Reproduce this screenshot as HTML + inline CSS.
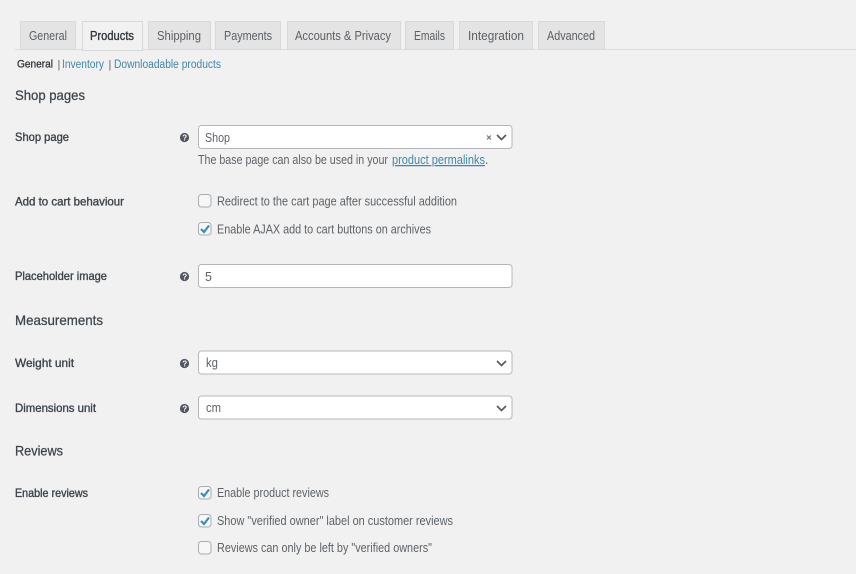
<!DOCTYPE html>
<html><head><meta charset="utf-8"><style>
html,body{margin:0;padding:0;background:#f1f1f1;width:856px;height:574px;overflow:hidden}
svg{display:block;filter:blur(.33px)}
text{font-family:"Liberation Sans",sans-serif;font-size:12.5px;fill:#5d6369}
.tab{fill:#5a6066;font-size:12.5px}
.tabon{fill:#32373c;font-size:12.5px;stroke:#32373c;stroke-width:.35px}
.b{fill:#3c434a;font-size:12px;stroke:#3c434a;stroke-width:.35px}
.sub{fill:#32373c;font-size:11px;stroke:#32373c;stroke-width:.3px}
.h{fill:#3c434a;font-size:14px;stroke:#3c434a;stroke-width:.25px}
.l{fill:#3d87ad;font-size:12px}
.i{fill:#5d6369}
.tb{fill:#e4e4e4;stroke:#d9d9d9}
.f{fill:#fff;stroke:#b4b7ba}
.c{fill:#f7f7f7;stroke:#a9adb1}
.q{fill:#fff;font-size:8px;font-weight:bold}
.chk{fill:none;stroke:#2c8fc4;stroke-width:2.1}
.chev{fill:none;stroke:#50575e;stroke-width:1.6}
</style></head><body>
<svg width="856" height="574" viewBox="0 0 856 574" xmlns="http://www.w3.org/2000/svg">
<rect width="856" height="574" fill="#f1f1f1"/>
<line x1="15" y1="49.5" x2="856" y2="49.5" stroke="#dcdcdc"/>
<rect class="tb" x="20.5" y="21.5" width="55" height="28"/>
<rect x="82.5" y="21.5" width="60" height="29" fill="#f1f1f1" stroke="#d9d9d9"/>
<line x1="83" y1="49.5" x2="142" y2="49.5" stroke="#f1f1f1"/>
<rect class="tb" x="148.5" y="21.5" width="62" height="28"/>
<rect class="tb" x="215.5" y="21.5" width="65" height="28"/>
<rect class="tb" x="287.5" y="21.5" width="113" height="28"/>
<rect class="tb" x="405.5" y="21.5" width="48" height="28"/>
<rect class="tb" x="459.5" y="21.5" width="73" height="28"/>
<rect class="tb" x="538.5" y="21.5" width="66" height="28"/>
<text class="tab" x="29" y="40" textLength="38" lengthAdjust="spacingAndGlyphs">General</text>
<text class="tabon" x="90" y="40" textLength="44" lengthAdjust="spacingAndGlyphs">Products</text>
<text class="tab" x="157" y="40" textLength="44" lengthAdjust="spacingAndGlyphs">Shipping</text>
<text class="tab" x="224" y="40" textLength="48" lengthAdjust="spacingAndGlyphs">Payments</text>
<text class="tab" x="295" y="40" textLength="96" lengthAdjust="spacingAndGlyphs">Accounts &amp; Privacy</text>
<text class="tab" x="414" y="40" textLength="31" lengthAdjust="spacingAndGlyphs">Emails</text>
<text class="tab" x="468" y="40" textLength="56" lengthAdjust="spacingAndGlyphs">Integration</text>
<text class="tab" x="547" y="40" textLength="48" lengthAdjust="spacingAndGlyphs">Advanced</text>

<text class="sub" x="17" y="67.500" textLength="36" lengthAdjust="spacingAndGlyphs">General</text>
<text x="57.5" y="68" style="font-size:11px">|</text>
<text class="l" x="62" y="68" textLength="42" lengthAdjust="spacingAndGlyphs" style="font-size:11.5px">Inventory</text>
<text x="108.5" y="68" style="font-size:11px">|</text>
<text class="l" x="114" y="68" textLength="107" lengthAdjust="spacingAndGlyphs" style="font-size:11.5px">Downloadable products</text>

<text class="h" x="15" y="100" textLength="70" lengthAdjust="spacingAndGlyphs">Shop pages</text>
<text class="b" x="15" y="141" textLength="54" lengthAdjust="spacingAndGlyphs">Shop page</text>
<text class="b" x="15" y="205.500" textLength="109" lengthAdjust="spacingAndGlyphs">Add to cart behaviour</text>
<text class="b" x="15" y="280" textLength="92" lengthAdjust="spacingAndGlyphs">Placeholder image</text>
<text class="h" x="15" y="325" textLength="88" lengthAdjust="spacingAndGlyphs">Measurements</text>
<text class="b" x="15" y="367" textLength="59" lengthAdjust="spacingAndGlyphs">Weight unit</text>
<text class="b" x="15" y="412" textLength="81" lengthAdjust="spacingAndGlyphs">Dimensions unit</text>
<text class="h" x="15" y="455.500" textLength="48" lengthAdjust="spacingAndGlyphs">Reviews</text>
<text class="b" x="15" y="497" textLength="73" lengthAdjust="spacingAndGlyphs">Enable reviews</text>

<g>
<circle cx="184.5" cy="137.5" r="4.6" fill="#50575e"/><text class="q" x="182.3" y="140.5">?</text>
<circle cx="184.5" cy="276.5" r="4.6" fill="#50575e"/><text class="q" x="182.3" y="279.5">?</text>
<circle cx="184.5" cy="363.5" r="4.6" fill="#50575e"/><text class="q" x="182.3" y="366.5">?</text>
<circle cx="184.5" cy="408.5" r="4.6" fill="#50575e"/><text class="q" x="182.3" y="411.5">?</text>
</g>

<rect class="f" x="198.5" y="125.5" width="313.500" height="23" rx="3"/>
<text class="i" x="205" y="142" textLength="25" lengthAdjust="spacingAndGlyphs">Shop</text>
<path d="M487 135.5l4 4m0-4l-4 4" stroke="#6b7177" stroke-width="1.1" fill="none"/>
<path class="chev" d="M497 135l4.500 4.500 4.500-4.500"/>
<text x="198" y="164" textLength="190" lengthAdjust="spacingAndGlyphs">The base page can also be used in your</text>
<text class="l" x="392" y="164" textLength="93" lengthAdjust="spacingAndGlyphs" text-decoration="underline" style="font-size:12.5px">product permalinks</text>
<text x="485" y="164">.</text>

<rect class="c" x="198.5" y="194.500" width="12.500" height="12.500" rx="3"/>
<text x="217" y="205.500" textLength="240" lengthAdjust="spacingAndGlyphs">Redirect to the cart page after successful addition</text>
<rect class="c" x="198.5" y="222.500" width="12.500" height="12.500" rx="3"/>
<path class="chk" d="M201 229l3 3 5-6.500"/>
<text x="217" y="233.500" textLength="214" lengthAdjust="spacingAndGlyphs">Enable AJAX add to cart buttons on archives</text>

<rect class="f" x="198.5" y="264.5" width="313.500" height="23" rx="3"/>
<text class="i" x="205" y="281">5</text>

<rect class="f" x="198.5" y="351" width="313.500" height="23" rx="3"/>
<text class="i" x="206" y="367" textLength="12" lengthAdjust="spacingAndGlyphs">kg</text>
<path class="chev" d="M497 361l4.500 4.500 4.500-4.500"/>

<rect class="f" x="198.5" y="396" width="313.500" height="23" rx="3"/>
<text class="i" x="206" y="412" textLength="15" lengthAdjust="spacingAndGlyphs">cm</text>
<path class="chev" d="M497 406l4.500 4.500 4.500-4.500"/>

<rect class="c" x="198.5" y="486.500" width="12.500" height="12.500" rx="3"/>
<path class="chk" d="M201 493l3 3 5-6.500"/>
<text x="217" y="497" textLength="112" lengthAdjust="spacingAndGlyphs">Enable product reviews</text>
<rect class="c" x="198.5" y="514.500" width="12.500" height="12.500" rx="3"/>
<path class="chk" d="M201 521l3 3 5-6.500"/>
<text x="217" y="525" textLength="236" lengthAdjust="spacingAndGlyphs">Show "verified owner" label on customer reviews</text>
<rect class="c" x="198.5" y="541.500" width="12.500" height="12.500" rx="3"/>
<text x="217" y="552" textLength="215" lengthAdjust="spacingAndGlyphs">Reviews can only be left by "verified owners"</text>
</svg>
</body></html>
